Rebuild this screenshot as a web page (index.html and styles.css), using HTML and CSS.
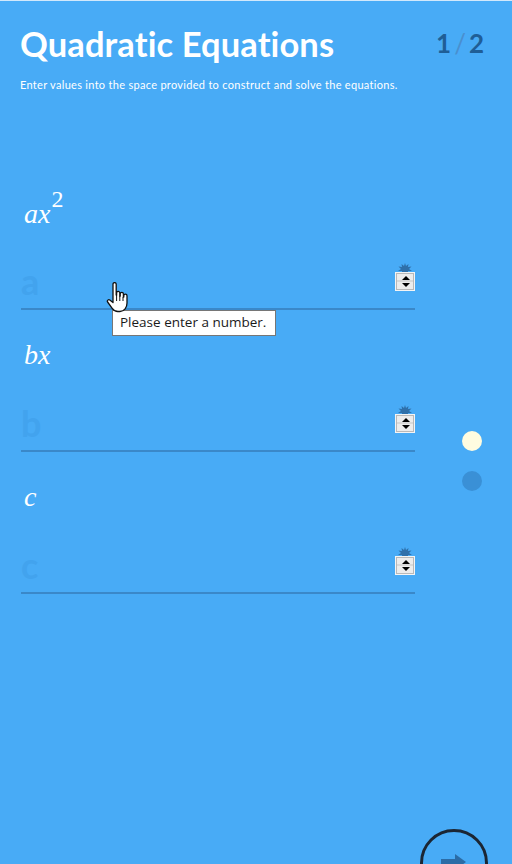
FILE: index.html
```html
<!DOCTYPE html>
<html lang="en">
<head>
<meta charset="utf-8">
<title>Quadratic Equations</title>
<link rel="stylesheet" href="styles.css">
</head>
<body>
<div class="page">
  <header class="header">
    <div class="header-top">
      <h1 class="title">Quadratic Equations</h1>
      <div class="counter"><span class="counter-num">1</span><span class="counter-sep">/</span><span class="counter-num">2</span></div>
    </div>
    <p class="subtitle">Enter values into the space provided to construct and solve the equations.</p>
  </header>

  <div class="layout">
    <form class="fields">
      <div class="field">
        <div class="term">ax<sup class="pow">2</sup></div>
        <div class="input-row">
          <input class="num-input" type="number" placeholder="a">
          <div class="spin">
            <svg class="splat" width="14" height="11" viewBox="0 0 14 11"><polygon points="7,0 8,3 10.5,1 10,4 13.5,3.5 11,6 14,8 10,8 10,11 7,9 4,11 4,8 0,8 3,6 0.5,3.5 4,4 3.5,1 6,3" fill="#2f70aa"/></svg>
            <div class="spin-box"><span class="spin-up"></span><span class="spin-down"></span></div>
          </div>
        </div>
      </div>
      <div class="field">
        <div class="term">bx</div>
        <div class="input-row">
          <input class="num-input" type="number" placeholder="b">
          <div class="spin">
            <svg class="splat" width="14" height="11" viewBox="0 0 14 11"><polygon points="7,0 8,3 10.5,1 10,4 13.5,3.5 11,6 14,8 10,8 10,11 7,9 4,11 4,8 0,8 3,6 0.5,3.5 4,4 3.5,1 6,3" fill="#2f70aa"/></svg>
            <div class="spin-box"><span class="spin-up"></span><span class="spin-down"></span></div>
          </div>
        </div>
      </div>
      <div class="field">
        <div class="term">c</div>
        <div class="input-row">
          <input class="num-input" type="number" placeholder="c">
          <div class="spin">
            <svg class="splat" width="14" height="11" viewBox="0 0 14 11"><polygon points="7,0 8,3 10.5,1 10,4 13.5,3.5 11,6 14,8 10,8 10,11 7,9 4,11 4,8 0,8 3,6 0.5,3.5 4,4 3.5,1 6,3" fill="#2f70aa"/></svg>
            <div class="spin-box"><span class="spin-up"></span><span class="spin-down"></span></div>
          </div>
        </div>
      </div>
    </form>

    <nav class="steps">
      <span class="dot dot-active"></span>
      <span class="dot"></span>
    </nav>
  </div>

  <div class="tooltip">Please enter a number.</div>

  <svg class="cursor" width="22" height="31" viewBox="0 0 22 31">
    <path d="M7 2.2a1.6 1.6 0 0 1 3.2 0V13h0.4V11a1.6 1.6 0 0 1 3.2 0v3h0.4v-2a1.6 1.6 0 0 1 3.2 0v3h0.4v-1.3a1.6 1.6 0 0 1 3.2 0V21c0 4.5-2.6 8.5-7 8.5h-2.2c-2.6 0-4.2-1.2-5.6-3.2L1.6 20c-0.9-1.3 0.9-3 2.2-2L7 20.6Z" fill="#fff" stroke="#111" stroke-width="1.3" stroke-linejoin="round"/>
    <path d="M10.6 13v6M13.8 14v5M17 15v4" stroke="#111" stroke-width="1"/>
  </svg>

  <button class="next" type="button" aria-label="Next">
    <svg width="26" height="20" viewBox="0 0 26 20"><path d="M0 6h14V1l11 8-11 8v-5H0Z" fill="#2b6ca6"/></svg>
  </button>
</div>
</body>
</html>
```

FILE: styles.css
```css
* {
  box-sizing: border-box;
}

html, body {
  margin: 0;
  padding: 0;
}

body {
  background: #48abf6;
  font-family: Lato, "Open Sans", sans-serif;
  color: #fff;
  overflow: hidden;
}

.page {
  position: relative;
  height: 864px;
  border-top: 1px solid #d2e8fb;
  overflow: hidden;
}

/* heading */
.header {
  padding: 26px 28px 0 20px;
}

.header-top {
  display: flex;
  justify-content: space-between;
  align-items: flex-start;
}

.title {
  margin: 0;
  font-size: 34.5px;
  line-height: 1;
  font-weight: 700;
  letter-spacing: 0.1px;
}

.counter {
  display: flex;
  gap: 3px;
  margin-top: 3px;
  font-size: 26px;
  line-height: 1;
  font-weight: 700;
  color: #1f5e96;
}

.counter-sep {
  font-weight: 400;
  color: #4a8fcf;
}

.subtitle {
  margin: 17px 0 0;
  font-size: 11px;
  letter-spacing: 0.3px;
  line-height: 1;
}

/* equation terms */
.layout {
  display: grid;
  grid-template-columns: 415px 1fr;
  margin-top: 109px;
}

.fields {
  display: flex;
  flex-direction: column;
  padding-left: 21px;
  margin: 0;
}

.field {
  display: flex;
  flex-direction: column;
  height: 142px;
}

.term {
  font-family: "Liberation Serif", "Times New Roman", serif;
  font-style: italic;
  font-size: 28px;
  line-height: 28px;
  height: 28px;
  padding-left: 3px;
}

.pow {
  font-style: normal;
  font-size: 24px;
  line-height: 0;
  vertical-align: 16px;
  margin-left: 1px;
}

.input-row {
  position: relative;
  margin-top: 37px;
}

.num-input {
  display: block;
  width: 100%;
  height: 46px;
  padding: 0 0 9px;
  border: 0;
  border-bottom: 2px solid #3a88c9;
  background: transparent;
  font-family: Lato, "Open Sans", sans-serif;
  font-size: 36px;
  font-weight: 700;
  line-height: 1;
  color: #fff;
  outline: none;
  -moz-appearance: textfield;
}

.num-input::placeholder {
  color: #42a3ee;
}

.num-input::-webkit-inner-spin-button,
.num-input::-webkit-outer-spin-button {
  -webkit-appearance: none;
  margin: 0;
}

/* stepper shown on the right of each input */
.spin {
  position: absolute;
  right: 0;
  top: -1px;
  width: 20px;
  display: flex;
  flex-direction: column;
  align-items: center;
}

.splat {
  display: block;
  margin-bottom: -2px;
}

.spin-box {
  width: 20px;
  height: 19px;
  border: 1px solid #f4f4f4;
  background: #d9d9d9;
  display: flex;
  flex-direction: column;
  padding: 1px;
  gap: 2px;
  box-shadow: inset 0 0 0 1px #b9b9b9;
}

.spin-up,
.spin-down {
  flex: 1;
  background: #ececec;
  position: relative;
}

.spin-up::after,
.spin-down::after {
  content: "";
  position: absolute;
  left: 5px;
  width: 0;
  height: 0;
  border-left: 4px solid transparent;
  border-right: 4px solid transparent;
}

.spin-up::after {
  top: 2px;
  border-bottom: 4px solid #000;
}

.spin-down::after {
  top: 1px;
  border-top: 4px solid #000;
}

/* step dots */
.steps {
  display: flex;
  flex-direction: column;
  align-items: center;
  gap: 20px;
  padding-top: 232px;
  padding-left: 47px;
  width: 20px;
  box-sizing: content-box;
}

.dot {
  display: block;
  width: 20px;
  height: 20px;
  border-radius: 50%;
  background: #3a90d6;
}

.dot-active {
  background: #fffce0;
}

/* validation bubble */
.tooltip {
  position: absolute;
  left: 112px;
  top: 309px;
  padding: 4px 9px 5px 7px;
  background: #fff;
  border: 1px solid #767676;
  font-family: "Open Sans", "Noto Sans", sans-serif;
  font-size: 13.5px;
  line-height: 15px;
  color: #1a1a1a;
  white-space: nowrap;
}

.cursor {
  position: absolute;
  left: 106px;
  top: 281px;
}

/* next button */
.next {
  position: absolute;
  left: 420px;
  top: 828px;
  width: 68px;
  height: 68px;
  border-radius: 50%;
  border: 3px solid #1b2634;
  background: transparent;
  padding: 0;
  display: flex;
  justify-content: center;
  align-items: center;
}
```
